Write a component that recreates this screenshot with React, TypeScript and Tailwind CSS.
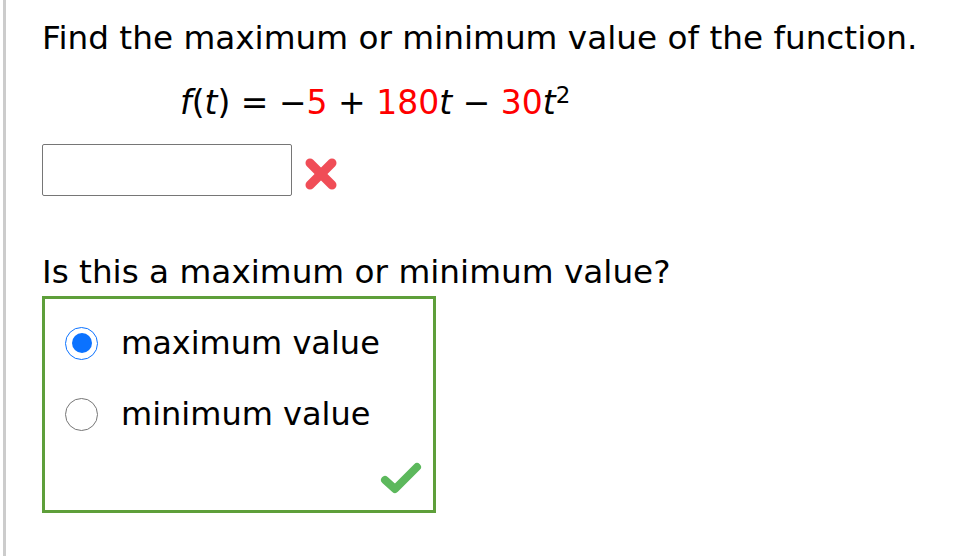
import React from "react";

const RedX = () => (
  <svg width="36" height="36" viewBox="0 0 36 36" className="shrink-0">
    <g stroke="#f04d57" strokeWidth="9" strokeLinecap="round">
      <line x1="7" y1="7" x2="29" y2="29" />
      <line x1="29" y1="7" x2="7" y2="29" />
    </g>
  </svg>
);

const GreenCheck = () => (
  <svg width="42" height="34" viewBox="0 0 42 34">
    <polyline
      points="5,19 15,28 37,6"
      fill="none"
      stroke="#5cb85c"
      strokeWidth="8"
      strokeLinecap="round"
      strokeLinejoin="round"
    />
  </svg>
);

const Radio = ({ checked }: { checked: boolean }) =>
  checked ? (
    <span className="flex h-[33px] w-[33px] shrink-0 items-center justify-center rounded-full border-[1.5px] border-[#0b72ff] bg-white">
      <span className="h-[20px] w-[20px] rounded-full bg-[#0b72ff]" />
    </span>
  ) : (
    <span className="h-[33px] w-[33px] shrink-0 rounded-full border-[1.5px] border-[#767676] bg-white" />
  );

export default function App() {
  return (
    <div
      className="ml-[3px] h-[556px] border-l-[3px] border-[#cccccc] bg-white pl-[36px] pt-[17px] text-black"
      style={{ fontFamily: '"DejaVu Sans", Verdana, sans-serif' }}
    >
      <p className="text-[32.7px] leading-[42px]">Find the maximum or minimum value of the function.</p>

      <p className="mt-[23px] pl-[138px] text-[33px] leading-[42px]">
        <i>f</i>(<i>t</i>) = −<span className="text-[#ff0000]">5</span> + <span className="text-[#ff0000]">180</span>
        <i>t</i> − <span className="text-[#ff0000]">30</span>
        <i>t</i>
        <sup className="text-[23px]">2</sup>
      </p>

      <div className="mt-[20px] flex items-center gap-[11px]">
        <input
          type="text"
          className="h-[52px] w-[250px] rounded-[2px] border border-[#767676] outline-none"
        />
        <span className="mt-[8px]">
          <RedX />
        </span>
      </div>

      <p className="mt-[55px] text-[32.7px] leading-[42px]">Is this a maximum or minimum value?</p>

      <div className="mt-[3px] flex h-[217px] w-[394px] flex-col border-[3px] border-[#5e9f3a] pl-[20px] pt-[24px]">
        <label className="flex items-center gap-[23px]">
          <Radio checked />
          <span className="text-[32px] leading-[40px]">maximum value</span>
        </label>
        <label className="mt-[31px] flex items-center gap-[23px]">
          <Radio checked={false} />
          <span className="text-[32px] leading-[40px]">minimum value</span>
        </label>
        <div className="mt-auto mb-[15px] mr-[11px] self-end">
          <GreenCheck />
        </div>
      </div>
    </div>
  );
}
